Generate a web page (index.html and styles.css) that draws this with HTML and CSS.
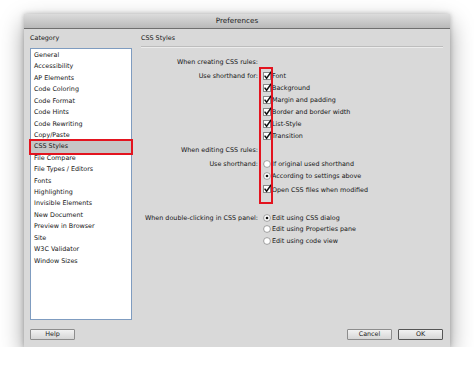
FILE: index.html
```html
<!DOCTYPE html>
<html>
<head>
<meta charset="utf-8">
<link rel="stylesheet" href="styles.css">
</head>
<body>
<div class="dialog">
  <div class="titlebar">Preferences</div>
  <div class="main">
    <div class="cat-col">
      <div class="col-label">Category</div>
      <ul class="cat-list">
        <li>General</li>
        <li>Accessibility</li>
        <li>AP Elements</li>
        <li>Code Coloring</li>
        <li>Code Format</li>
        <li>Code Hints</li>
        <li>Code Rewriting</li>
        <li>Copy/Paste</li>
        <li class="selected">CSS Styles</li>
        <li>File Compare</li>
        <li>File Types / Editors</li>
        <li>Fonts</li>
        <li>Highlighting</li>
        <li>Invisible Elements</li>
        <li>New Document</li>
        <li>Preview in Browser</li>
        <li>Site</li>
        <li>W3C Validator</li>
        <li>Window Sizes</li>
      </ul>
    </div>
    <div class="panel">
      <div class="panel-head">CSS Styles</div>
      <div class="form">
        <div class="row"><div class="lbl">When creating CSS rules:</div><div class="ctl"></div></div>
        <div class="row gap2"><div class="lbl">Use shorthand for:</div><div class="ctl"><svg class="cb" viewBox="0 0 9 9"><rect x="0.5" y="1.5" width="7" height="7" fill="#fff" stroke="#8a8a8a"/><path d="M1.6 4.6 L3.6 7.2 L8.3 0.6" fill="none" stroke="#111" stroke-width="1.5"/></svg>Font</div></div>
        <div class="row"><div class="lbl"></div><div class="ctl"><svg class="cb" viewBox="0 0 9 9"><rect x="0.5" y="1.5" width="7" height="7" fill="#fff" stroke="#8a8a8a"/><path d="M1.6 4.6 L3.6 7.2 L8.3 0.6" fill="none" stroke="#111" stroke-width="1.5"/></svg>Background</div></div>
        <div class="row"><div class="lbl"></div><div class="ctl"><svg class="cb" viewBox="0 0 9 9"><rect x="0.5" y="1.5" width="7" height="7" fill="#fff" stroke="#8a8a8a"/><path d="M1.6 4.6 L3.6 7.2 L8.3 0.6" fill="none" stroke="#111" stroke-width="1.5"/></svg>Margin and padding</div></div>
        <div class="row"><div class="lbl"></div><div class="ctl"><svg class="cb" viewBox="0 0 9 9"><rect x="0.5" y="1.5" width="7" height="7" fill="#fff" stroke="#8a8a8a"/><path d="M1.6 4.6 L3.6 7.2 L8.3 0.6" fill="none" stroke="#111" stroke-width="1.5"/></svg>Border and border width</div></div>
        <div class="row"><div class="lbl"></div><div class="ctl"><svg class="cb" viewBox="0 0 9 9"><rect x="0.5" y="1.5" width="7" height="7" fill="#fff" stroke="#8a8a8a"/><path d="M1.6 4.6 L3.6 7.2 L8.3 0.6" fill="none" stroke="#111" stroke-width="1.5"/></svg>List-Style</div></div>
        <div class="row"><div class="lbl"></div><div class="ctl"><svg class="cb" viewBox="0 0 9 9"><rect x="0.5" y="1.5" width="7" height="7" fill="#fff" stroke="#8a8a8a"/><path d="M1.6 4.6 L3.6 7.2 L8.3 0.6" fill="none" stroke="#111" stroke-width="1.5"/></svg>Transition</div></div>
        <div class="row gap2"><div class="lbl">When editing CSS rules:</div><div class="ctl"></div></div>
        <div class="row gap2"><div class="lbl">Use shorthand:</div><div class="ctl"><svg class="rb" viewBox="0 0 8 8"><circle cx="4" cy="4" r="3.4" fill="#fff" stroke="#8a8a8a" stroke-width="0.8"/></svg>If original used shorthand</div></div>
        <div class="row short"><div class="lbl"></div><div class="ctl"><svg class="rb" viewBox="0 0 8 8"><circle cx="4" cy="4" r="3.4" fill="#fff" stroke="#8a8a8a" stroke-width="0.8"/><circle cx="4" cy="4" r="1.3" fill="#111"/></svg>According to settings above</div></div>
        <div class="row gap2"><div class="lbl"></div><div class="ctl"><svg class="cb" viewBox="0 0 9 9"><rect x="0.5" y="1.5" width="7" height="7" fill="#fff" stroke="#8a8a8a"/><path d="M1.6 4.6 L3.6 7.2 L8.3 0.6" fill="none" stroke="#111" stroke-width="1.5"/></svg>Open CSS files when modified</div></div>
        <div class="row gap16"><div class="lbl">When double-clicking in CSS panel:</div><div class="ctl"><svg class="rb" viewBox="0 0 8 8"><circle cx="4" cy="4" r="3.4" fill="#fff" stroke="#8a8a8a" stroke-width="0.8"/><circle cx="4" cy="4" r="1.3" fill="#111"/></svg>Edit using CSS dialog</div></div>
        <div class="row short"><div class="lbl"></div><div class="ctl"><svg class="rb" viewBox="0 0 8 8"><circle cx="4" cy="4" r="3.4" fill="#fff" stroke="#8a8a8a" stroke-width="0.8"/></svg>Edit using Properties pane</div></div>
        <div class="row short"><div class="lbl"></div><div class="ctl"><svg class="rb" viewBox="0 0 8 8"><circle cx="4" cy="4" r="3.4" fill="#fff" stroke="#8a8a8a" stroke-width="0.8"/></svg>Edit using code view</div></div>
        <div class="annot"></div>
      </div>
    </div>
  </div>
  <div class="buttons">
    <div class="btn">Help</div>
    <div class="spacer"></div>
    <div class="btn">Cancel</div>
    <div class="btn default">OK</div>
  </div>
</div>
</body>
</html>
```

FILE: styles.css
```css
* { box-sizing: border-box; }
html, body { margin: 0; padding: 0; background: #ffffff; }
body {
  font-family: "DejaVu Sans", "Liberation Sans", sans-serif;
  font-size: 6.4px;
  color: #141414;
}
.dialog {
  margin: 14px 0 0 24px;
  width: 426px;
  height: 333px;
  background: #d9d9d9;
  display: flex;
  flex-direction: column;
  box-shadow: 0 9px 22px rgba(0,0,0,0.38), 0 0 5px rgba(0,0,0,0.25);
}
.titlebar {
  height: 15px;
  flex: none;
  background: linear-gradient(#dcdcdc, #b9b9b9);
  border-bottom: 1px solid #6f6f6f;
  text-align: center;
  font-size: 7.2px;
  line-height: 14px;
  color: #1a1a1a;
}
.main {
  height: 291px;
  flex: none;
  display: flex;
  gap: 9px;
  padding: 4px 7px 0 6px;
}
.cat-col { width: 102px; flex: none; display: flex; flex-direction: column; }
.col-label { height: 10px; line-height: 10px; }
.cat-list {
  list-style: none;
  margin: 5px 0 0 0;
  padding: 1px 0 0 0;
  height: 272px;
  background: #fff;
  border: 1px solid #7f9cc0;
}
.cat-list li {
  height: 11.43px;
  line-height: 11.43px;
  padding-left: 3px;
  white-space: nowrap;
}
.cat-list li.selected {
  background: #c6c6c6;
  outline: 2px solid #e3141f;
  outline-offset: 0;
}
.panel { flex: 1; }
.panel-head {
  height: 14px;
  line-height: 10px;
  border-bottom: 1px solid #bdbdbd;
  box-shadow: 0 1px 0 #ececec;
}
.form { padding-top: 9px; position: relative; }
.row { display: flex; height: 12px; align-items: center; }
.row.gap2 { margin-top: 2px; }
.row.short { height: 11.5px; }
.row.gap16 { margin-top: 16px; }
.lbl { width: 117px; flex: none; text-align: right; white-space: nowrap; }
.ctl { margin-left: 5px; display: flex; align-items: center; white-space: nowrap; }
.cb { width: 9px; height: 9px; margin-top: -2px; flex: none; }
.rb { width: 8px; height: 8px; margin-right: 1px; flex: none; }
.annot {
  position: absolute;
  left: 118px;
  top: 20px;
  width: 14px;
  height: 137px;
  border: 2px solid #e3141f;
}
.buttons {
  display: flex;
  gap: 6px;
  padding: 9px 7px 0 6px;
}
.spacer { flex: 1; }
.btn {
  width: 45px;
  height: 11px;
  line-height: 9px;
  text-align: center;
  border: 1px solid #8d8d8d;
  background: linear-gradient(#f2f2f2, #d6d6d6);
  border-radius: 1px;
  color: #222;
}
.btn.default { border: 1.5px solid #555; line-height: 8px; }
```
